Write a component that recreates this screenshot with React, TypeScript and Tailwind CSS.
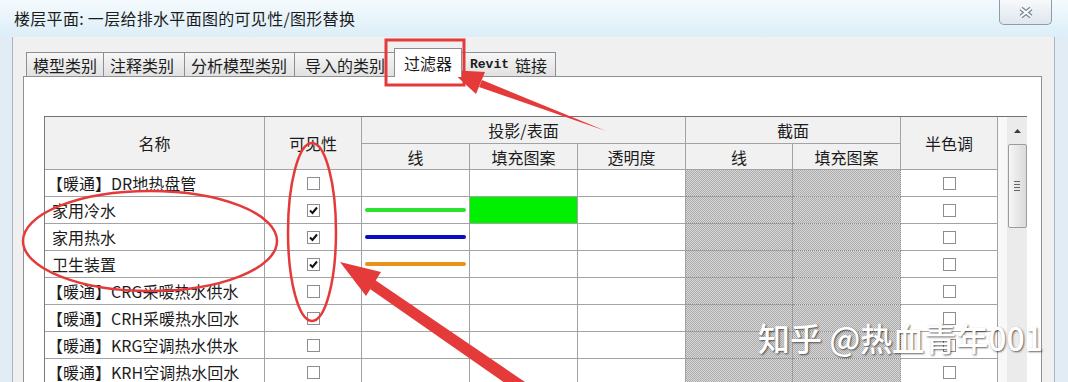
import React from "react";

const FONT = '"Noto Sans CJK SC", "Microsoft YaHei", sans-serif';

type Row = { name: string; on: boolean; line?: string; fill?: string };

const rows: Row[] = [
  { name: "【暖通】DR地热盘管", on: false },
  { name: "家用冷水", on: true, line: "bg-[#2be22b]", fill: "bg-[#00f000]" },
  { name: "家用热水", on: true, line: "bg-[#0b0bc6]" },
  { name: "卫生装置", on: true, line: "bg-[#e8921c]" },
  { name: "【暖通】CRG采暖热水供水", on: false },
  { name: "【暖通】CRH采暖热水回水", on: false },
  { name: "【暖通】KRG空调热水供水", on: false },
  { name: "【暖通】KRH空调热水回水", on: false },
  { name: "", on: false },
];

const tabs = [
  { label: "模型类别", w: "w-[78px]" },
  { label: "注释类别", w: "w-[82px] -ml-px" },
  { label: "分析模型类别", w: "w-[111px] -ml-px" },
  { label: "导入的类别", w: "w-[104px] -ml-px pl-[10px]" },
];

function Check({ on }: { on: boolean }) {
  return (
    <span className="w-[13px] h-[13px] border border-[#8e8e8e] bg-white flex items-center justify-center">
      {on && (
        <svg width="11" height="11" viewBox="0 0 11 11">
          <path d="M2 5.5 L4.5 8 L9 2.5" fill="none" stroke="#111" strokeWidth="2" />
        </svg>
      )}
    </span>
  );
}

const cell = "border-r border-b border-[#a3a3a3] flex items-center";
const head = "border-r border-b border-[#a3a3a3] bg-[#f1f1f1] flex items-center justify-center";
const hatch =
  "border-r border-b border-dotted border-[#8c8c8c] bg-[#c2c2c2] bg-[image:repeating-conic-gradient(#adadad_0%_25%,#d6d6d6_0%_50%)] bg-[length:2px_2px]";

export default function App() {
  return (
    <div
      className="relative w-[1068px] h-[382px] overflow-hidden bg-[#dfeaf3] text-[16px] text-[#1c1c1c]"
      style={{ fontFamily: FONT }}
    >
      {/* Title bar */}
      <div className="h-[37px] flex items-start bg-linear-to-b from-[#f4fafd] to-[#dceef8]">
        <div className="pl-[14px] pt-[6px] leading-[24px] tracking-[0.3px]">楼层平面: 一层给排水平面图的可见性/图形替换</div>
        <div className="ml-auto mr-[16px] w-[53px] h-[25px] border border-t-0 border-[#8d9cab] rounded-b-[5px] bg-linear-to-b from-[#f7f9fb] to-[#dfe6ed] flex items-center justify-center">
          <svg width="16" height="13" viewBox="0 0 16 13">
            <path d="M3 2.5 L13 10.5 M13 2.5 L3 10.5" stroke="#76889a" strokeWidth="4.5" />
            <path d="M3 2.5 L13 10.5 M13 2.5 L3 10.5" stroke="#fff" strokeWidth="2" />
          </svg>
        </div>
      </div>

      {/* Window body */}
      <div className="flex h-[345px]">
        <div className="w-[13px] border-r border-[#a8b6c2] bg-[#e2ecf4]" />
        <div className="flex-1 bg-[#f0f0f0] pt-[11px] pl-[10px] pr-[12px] flex flex-col">
          {/* Tabs */}
          <div className="flex items-end h-[28px] pl-[3px]">
            {tabs.map((t) => (
              <div
                key={t.label}
                className={
                  "h-[24px] border border-b-0 border-[#8b8e95] bg-linear-to-b from-[#f6f6f6] to-[#e1e1e1] flex items-center px-[6px] whitespace-nowrap overflow-hidden " +
                  t.w
                }
              >
                {t.label}
              </div>
            ))}
            <div className="relative z-10 -ml-[4px] -mb-px h-[29px] w-[68px] border border-b-0 border-[#8b8e95] bg-white flex items-center justify-center">
              过滤器
            </div>
            <div className="h-[24px] w-[94px] border border-b-0 border-l-0 border-[#8b8e95] bg-linear-to-b from-[#f6f6f6] to-[#e1e1e1] flex items-center justify-center gap-[6px] whitespace-nowrap">
              <span className="text-[13px] font-bold" style={{ fontFamily: '"Liberation Mono", monospace' }}>
                Revit
              </span>
              <span>链接</span>
            </div>
          </div>

          {/* Tab panel */}
          <div className="flex-1 border border-b-0 border-[#8e9196] bg-white pt-[39px] pl-[20px]">
            <div className="flex border-t border-[#727272] w-[983px]">
              <div className="grid grid-cols-[220px_97px_108px_108px_108px_107px_108px_97px] grid-rows-[27px_26px] auto-rows-[27px] border-l border-[#7a7a7a]">
                <div className={head + " row-span-2"}>名称</div>
                <div className={head + " row-span-2"}>可见性</div>
                <div className={head + " col-span-3"}>投影/表面</div>
                <div className={head + " col-span-2"}>截面</div>
                <div className={head + " row-span-2"}>半色调</div>
                <div className={head}>线</div>
                <div className={head}>填充图案</div>
                <div className={head}>透明度</div>
                <div className={head}>线</div>
                <div className={head}>填充图案</div>

                {rows.map((r, i) => (
                  <React.Fragment key={i}>
                    <div className={cell + (r.name.startsWith("【") ? " pl-[2px]" : " pl-[7px]") + " whitespace-nowrap"}>
                      {r.name}
                    </div>
                    <div className={cell + " justify-center"}>{r.name && <Check on={r.on} />}</div>
                    <div className={cell + " px-[3px]"}>
                      {r.line && <div className={"h-[4px] w-full rounded-full " + r.line} />}
                    </div>
                    <div className={cell + (r.fill ? " " + r.fill : "")} />
                    <div className={cell} />
                    <div className={hatch} />
                    <div className={hatch} />
                    <div className={cell + " justify-center"}>{r.name && <Check on={false} />}</div>
                  </React.Fragment>
                ))}
              </div>

              {/* Scrollbar */}
              <div className="w-[29px] bg-[#f8f8f8] pl-[9px] flex">
                <div className="w-[20px] bg-[#ebebeb] flex flex-col items-center">
                  <div className="h-[27px] flex items-center justify-center">
                    <svg width="7" height="4" viewBox="0 0 7 4">
                      <path d="M0 4 L3.5 0 L7 4 Z" fill="#3a3a3a" />
                    </svg>
                  </div>
                  <div className="w-[19px] h-[84px] rounded-[2px] border border-[#9c9c9c] bg-linear-to-r from-[#f6f6f6] to-[#dadada] flex flex-col items-center justify-center gap-[2px]">
                    <div className="w-[6px] h-px bg-[#666]" />
                    <div className="w-[6px] h-px bg-[#666]" />
                    <div className="w-[6px] h-px bg-[#666]" />
                    <div className="w-[6px] h-px bg-[#666]" />
                  </div>
                </div>
              </div>
            </div>
          </div>
        </div>
        <div className="w-[14px] border-l border-[#a8b6c2] bg-[#e2ecf4]" />
      </div>

      {/* Red annotations */}
      <svg className="absolute inset-0 pointer-events-none" width="1068" height="382" viewBox="0 0 1068 382">
        <rect x="386" y="40" width="78" height="45" fill="none" stroke="#e53a3a" strokeWidth="3" />
        <polygon points="450,70 485,72 476,94" fill="#e53a3a" />
        <polygon points="482,80 479,87 606,131" fill="#e53a3a" />
        <polygon points="340,262 381,272 366,296" fill="#e53a3a" />
        <polygon points="375,280 370,289 515,390 525,382" fill="#e53a3a" />
        <ellipse cx="150" cy="241" rx="127" ry="50" fill="none" stroke="#e53a3a" strokeWidth="2.5" />
        <ellipse cx="312" cy="232" rx="24" ry="89" fill="none" stroke="#e53a3a" strokeWidth="2.5" />
      </svg>

      {/* Watermark */}
      <div className="absolute left-[758px] top-[317px] text-[32px] leading-[40px] font-medium text-white whitespace-nowrap [text-shadow:1px_1px_2px_rgba(0,0,0,0.6)]">
        知乎 @热血青年001
      </div>
    </div>
  );
}
